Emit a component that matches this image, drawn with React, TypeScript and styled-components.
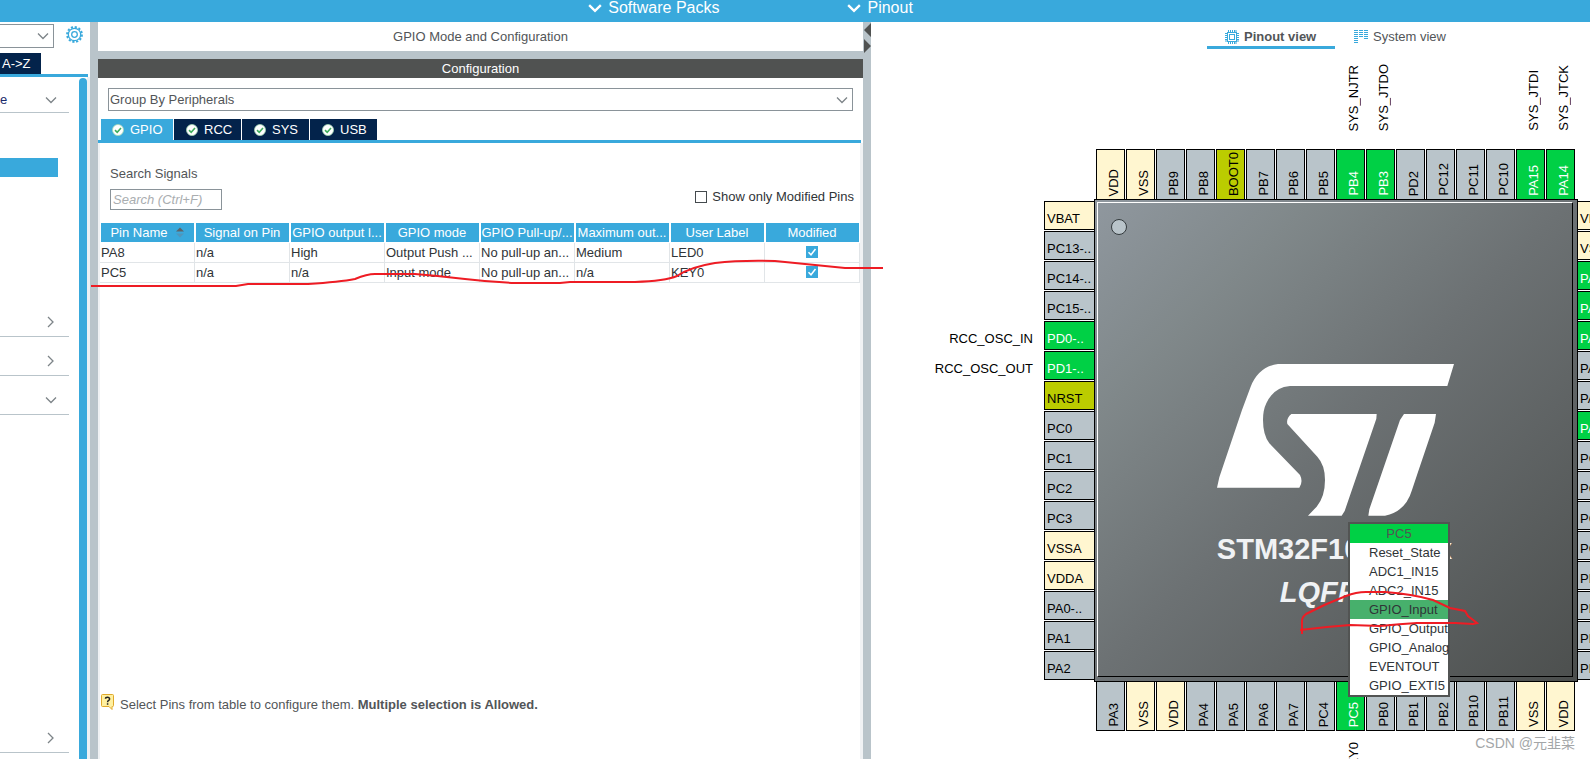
import React from "react";
import styled, { createGlobalStyle, css } from "styled-components";

const blue = "#39a9dc";
const navy = "#03234b";
const steel = "#b9c4ca";
const slate = "#525558";
const dark = "#505251";

const GlobalStyle = createGlobalStyle`
  *, *::before, *::after { box-sizing: border-box; }
  body {
    margin: 0;
    background: #fff;
    color: ${slate};
    font: 13px/16px "Liberation Sans", "Noto Sans CJK SC", sans-serif;
  }
  button, input, select { font: inherit; color: inherit; }
  button { border: 0; padding: 0; background: none; text-align: left; }
`;

const Page = styled.div`
  display: flex;
  flex-direction: column;
  height: 100vh;
  overflow: hidden;
`;

const MenuBar = styled.nav`
  flex: none;
  display: flex;
  gap: 128px;
  height: 22px;
  padding-left: 37%;
  background: ${blue};
`;

const MenuButton = styled.button`
  display: flex;
  align-items: center;
  gap: 6px;
  height: 16px;
  font-size: 16px;
  line-height: 16px;
  color: #fff;
`;

const Workspace = styled.div`
  flex: 1;
  min-height: 0;
  display: grid;
  grid-template-columns: 90px 8px minmax(0, 765fr) 8px minmax(0, 719fr);
`;

const Divider = styled.div`
  position: relative;
  background: ${steel};
`;

const SplitArrows = styled.svg`
  display: block;
`;

/* ---------- category column ---------- */

const Sidebar = styled.aside`
  display: flex;
  flex-direction: column;
  overflow: hidden;
`;

const SearchLine = styled.div`
  display: flex;
  align-items: center;
  gap: 12px;
  height: 26px;
  margin-top: 1px;
`;

const SelectBox = styled.div<{ $open?: boolean }>`
  position: relative;
  width: 100%;
  height: ${(p) => (p.$open ? 24 : 23)}px;
  border: 1px solid #8a9399;
  ${(p) => p.$open && css`width: 54px; border-left: 0;`}
`;

const NativeSelect = styled.select`
  display: block;
  width: 100%;
  height: 100%;
  padding: 0 24px 0 1px;
  border: 0;
  border-radius: 0;
  background: #fff;
  appearance: none;
`;

const SelectArrow = styled.span`
  position: absolute;
  top: 5px;
  right: 4px;
  display: flex;
  pointer-events: none;
`;

const SortTabs = styled.div`
  display: flex;
  width: 88px;
  margin-top: 4px;
  border-bottom: 3px solid ${blue};
`;

const SortTab = styled.button`
  width: 41px;
  height: 21px;
  padding-left: 2px;
  background: ${navy};
  color: #fff;
`;

const CategoryArea = styled.div`
  flex: 1;
  min-height: 0;
  display: flex;
  justify-content: space-between;
  padding-right: 3px;
  background: linear-gradient(to right, #fff 87px, #edf1f4 87px);
`;

const CategoryList = styled.div`
  width: 69px;
`;

const CategoryButton = styled.button<{ $first?: boolean }>`
  display: flex;
  align-items: center;
  justify-content: space-between;
  width: 100%;
  height: ${(p) => (p.$first ? 36 : 39)}px;
  padding: 10px 12px 0 0;
  border-bottom: 1px solid ${steel};
  color: #1b2a6b;
`;

const CategoryBody = styled.div<{ $height: number }>`
  height: ${(p) => p.$height}px;
  padding-top: 45px;
`;

const SelectedItem = styled.div`
  width: 58px;
  height: 19px;
  background: ${blue};
`;

const ScrollThumb = styled.div`
  width: 8px;
  margin-top: 1px;
  border-radius: 4px 4px 0 0;
  background: ${blue};
`;

/* ---------- configuration panel ---------- */

const ConfigPanel = styled.section`
  position: relative;
  display: flex;
  flex-direction: column;
  min-width: 0;
`;

const PanelTitle = styled.h1`
  margin: 0;
  height: 29px;
  font-size: 13px;
  font-weight: 400;
  line-height: 29px;
  text-align: center;
`;

const PanelSubtitle = styled.h2`
  margin: 0;
  height: 27px;
  border-top: 8px solid ${steel};
  background: ${dark};
  color: #fff;
  font-size: 13px;
  font-weight: 400;
  line-height: 19px;
  text-align: center;
`;

const GroupLine = styled.div`
  padding: 10px 10px 8px;
`;

const PeripheralTabs = styled.div`
  display: flex;
  gap: 1px;
  margin-right: 2px;
  padding-left: 3px;
  border-bottom: 3px solid ${blue};
`;

const PeripheralTab = styled.button<{ $active?: boolean }>`
  display: flex;
  align-items: center;
  gap: 6px;
  width: ${(p) => (p.$active ? 72 : 67)}px;
  height: 21px;
  padding-left: ${(p) => (p.$active ? 11 : 12)}px;
  background: ${(p) => (p.$active ? blue : navy)};
  color: #fff;
`;

const TabBody = styled.div`
  flex: 1;
  display: flex;
  flex-direction: column;
  border: solid #f0f2f4;
  border-width: 0 3px 0 2px;
`;

const FilterLine = styled.div`
  display: flex;
  justify-content: space-between;
  align-items: flex-end;
  padding: 23px 6px 0 10px;
`;

const SearchField = styled.label`
  display: flex;
  flex-direction: column;
  gap: 7px;
`;

const SearchInput = styled.input`
  width: 112px;
  height: 21px;
  padding: 0 2px;
  border: 1px solid #8a9399;
  &::placeholder { color: #a9adb0; font-style: italic; opacity: 1; }
`;

const CheckLabel = styled.label`
  display: flex;
  align-items: center;
  gap: 5px;
  margin-bottom: 5px;
  color: #2f3437;
`;

const CheckBox = styled.input`
  width: 12px;
  height: 12px;
  margin: 0;
  border: 1px solid #444a4e;
  background: #fff;
  appearance: none;
  &:checked {
    border-color: ${blue};
    background: ${blue} url("data:image/svg+xml,%3Csvg xmlns='http://www.w3.org/2000/svg' viewBox='0 0 10 10'%3E%3Cpath d='M1.5 5.3 4 7.8 8.5 2' fill='none' stroke='%23fff' stroke-width='1.5'/%3E%3C/svg%3E") center / 10px no-repeat;
  }
`;

const PinTable = styled.table`
  width: 100%;
  margin-top: 13px;
  border-spacing: 0;
  table-layout: fixed;
  color: #2f3437;
  white-space: nowrap;
`;

const HeadCell = styled.th`
  height: 20px;
  padding: 0;
  border: 0 solid #fff;
  border-width: 0 1px 1px;
  background: ${blue};
  color: #fff;
  font-weight: 400;
  overflow: hidden;
`;

const HeadContent = styled.span`
  display: inline-flex;
  align-items: center;
  gap: 8px;
  padding-right: 1px;
`;

const Cell = styled.td<{ $center?: boolean }>`
  height: 20px;
  padding: 0 0 0 1px;
  border: 0 solid #e1e5e8;
  border-width: 0 1px 1px 0;
  overflow: hidden;
  text-align: ${(p) => (p.$center ? "center" : "left")};
  ${(p) => p.$center && css`padding: 0 0 2px;`}
  ${CheckBox} { display: block; margin: 0 auto; }
`;

const Hint = styled.p`
  display: flex;
  align-items: center;
  gap: 6px;
  margin: auto 0 43px;
  padding-left: 1px;
`;

const HintIcon = styled.svg`
  margin-bottom: 6px;
`;

const PanelInk = styled.svg`
  position: absolute;
  top: 230px;
  left: -8px;
  overflow: visible;
  pointer-events: none;
  z-index: 2;
`;

/* ---------- pinout canvas ---------- */

const Canvas = styled.main`
  position: relative;
  min-width: 0;
  overflow: hidden;
`;

const CanvasInner = styled.div`
  display: flex;
  flex-direction: column;
  align-items: center;
  min-width: 930px;
`;

const ViewTabs = styled.div`
  display: flex;
  padding-right: 2px;
`;

const ViewTab = styled.button<{ $active?: boolean }>`
  display: flex;
  align-items: center;
  gap: 5px;
  width: 128px;
  height: 27px;
  padding: 5px 0 0 ${(p) => (p.$active ? 18 : 19)}px;
  border-bottom: 3px solid ${(p) => (p.$active ? blue : "transparent")};
  font-weight: ${(p) => (p.$active ? 700 : 400)};
`;

const Package = styled.div`
  display: grid;
  grid-template-columns: 170px 484px 170px;
  grid-template-areas: ". top ." "left chip right" ". bottom .";
`;

type Side = "top" | "bottom" | "left" | "right";

const PinBank = styled.div<{ $side: Side }>`
  grid-area: ${(p) => p.$side};
  display: flex;
  gap: 1px;
  padding-left: 2px;
  ${(p) => p.$side === "top" && css`height: 150px; align-items: flex-end;`}
  ${(p) => (p.$side === "left" || p.$side === "right") && css`
    flex-direction: column;
    padding: 2px 0 0;
    align-items: ${p.$side === "left" ? "flex-end" : "flex-start"};
  `}
`;

const Slot = styled.div<{ $side: Side }>`
  display: flex;
  flex-direction: ${(p) =>
    ({ top: "column-reverse", bottom: "column", left: "row-reverse", right: "row" })[p.$side]};
`;

const pinColors = {
  free: ["#b9c4ca", "#000"],
  power: ["#fff6d0", "#000"],
  system: ["#bbcc00", "#000"],
  used: ["#00d045", "#fff"],
} as const;

type Kind = keyof typeof pinColors;

const upright = css`
  writing-mode: vertical-rl;
  transform: rotate(180deg);
`;

const PinText = styled.span<{ $side: Side }>`
  display: block;
  line-height: 16px;
  white-space: nowrap;
  ${(p) => (p.$side === "top" || p.$side === "bottom") && upright}
`;

const PinBox = styled.button<{ $side: Side; $kind: Kind }>`
  display: flex;
  border: 1px solid #000;
  background: ${(p) => pinColors[p.$kind][0]};
  color: ${(p) => pinColors[p.$kind][1]};
  ${(p) =>
    p.$side === "top" || p.$side === "bottom"
      ? css`
          width: 29px;
          height: ${p.$side === "top" ? 50 : 49}px;
          align-items: flex-end;
          padding: 0 0 3px 9px;
          border-${p.$side === "top" ? "bottom" : "top"}-width: 0;
        `
      : css`
          width: 50px;
          height: 29px;
          padding: 9px 0 0 2px;
          border-${p.$side === "left" ? "right" : "left"}-width: 0;
        `}
`;

const Signal = styled.span<{ $side: Side }>`
  color: #000;
  ${(p) => p.$side === "top" && css`padding: 0 0 18px 10px;`}
  ${(p) => p.$side === "bottom" && css`padding: 11px 0 0 10px;`}
  ${(p) => p.$side === "left" && css`padding: 10px 11px 0 0;`}
`;

const Chip = styled.div`
  grid-area: chip;
  position: relative;
  height: 483px;
  padding: 2px 4px 4px 2px;
  border: 1px solid #000;
  background: linear-gradient(135deg, #8f979e, #4b4e4d);
`;

const ChipFace = styled.div`
  display: flex;
  flex-direction: column;
  height: 100%;
  padding: 16px 0 0 13px;
  border: 1px solid #000;
  border-top-color: #fff;
  border-left-color: #fff;
  background: linear-gradient(135deg, #8f979e, #80888a 22%, #6c7173 50%, #4d504f);
`;

const PinOneMark = styled.span`
  width: 16px;
  height: 16px;
  border: 1px solid #333a3d;
  border-radius: 50%;
  background: ${steel};
`;

const Logo = styled.svg`
  display: block;
  margin: 129px 0 0 106px;
`;

const ChipName = styled.div<{ $italic?: boolean }>`
  margin-top: ${(p) => (p.$italic ? 10 : 17)}px;
  padding-right: 14px;
  color: #f0f2f4;
  font-size: 29px;
  font-weight: 700;
  font-style: ${(p) => (p.$italic ? "italic" : "normal")};
  line-height: 33px;
  text-align: center;
`;

const PinMenu = styled.div`
  position: absolute;
  top: 322px;
  left: 253px;
  z-index: 2;
  display: flex;
  flex-direction: column;
  width: 102px;
  border: 2px solid #525453;
  background: #fff;
`;

const PinMenuTitle = styled.div`
  height: 19px;
  background: #00d045;
  color: #525453;
  line-height: 19px;
  text-align: center;
`;

const PinMenuItem = styled.button<{ $active?: boolean }>`
  height: 19px;
  padding-left: 19px;
  background: ${(p) => (p.$active ? "#47b06c" : "#fff")};
  color: #2f3437;
  line-height: 19px;
  white-space: nowrap;
`;

const ChipInk = styled.svg`
  position: absolute;
  top: 391px;
  left: 205px;
  z-index: 3;
  pointer-events: none;
`;

const Watermark = styled.div`
  position: absolute;
  right: 15px;
  bottom: 6px;
  color: #a3a6a8;
  font-size: 14px;
  line-height: 20px;
`;

/* ---------- drawings ---------- */

const Chevron = ({ dir = "down", bold }: { dir?: "down" | "right"; bold?: boolean }) => (
  <svg width={bold ? 14 : 12} height={bold ? 14 : 12} viewBox="0 0 12 12" aria-hidden="true"
    fill="none" stroke={bold ? "#fff" : "#7d8488"} strokeWidth={bold ? 2 : 1.3}>
    <path d={dir === "down" ? "M1 3.5 6 8.5 11 3.5" : "M3 1 8 6 3 11"} />
  </svg>
);

const Gear = () => (
  <svg width="17" height="17" viewBox="0 0 17 17" fill="none" stroke={blue} aria-hidden="true">
    <circle cx="8.5" cy="8.5" r="6.2" strokeWidth="1.3" />
    <circle cx="8.5" cy="8.5" r="7.5" strokeWidth="1.8" strokeDasharray="2.2 1.727" />
    <circle cx="8.5" cy="8.5" r="2.8" strokeWidth="1.3" />
  </svg>
);

const CheckBadge = () => (
  <svg width="12" height="12" viewBox="0 0 12 12" aria-hidden="true">
    <circle cx="6" cy="6" r="5.5" fill="#fff" stroke="#a5d8b4" strokeWidth="0.8" />
    <path d="M3 6.2 5.2 8.3 9 4" fill="none" stroke="#3fae5d" strokeWidth="1.6" />
  </svg>
);

const SortMark = () => (
  <svg width="8" height="11" viewBox="0 0 8 11" aria-hidden="true">
    <path d="M0 4.5 4 0.5 8 4.5Z" fill="#5d6468" />
    <path d="M0 6.5 4 10.5 8 6.5Z" fill="#5096bb" />
  </svg>
);

const HintMark = () => (
  <HintIcon width="13" height="16" viewBox="0 0 13 16" aria-hidden="true">
    <path d="M.5 1.5q0-1 1-1h10q1 0 1 1v10q0 1-1 1h-.5v3l-3-3H1.500q-1 0-1-1Z" fill="#fff0a0" stroke="#e0a92b" />
    <path d="M4.500 4.800Q4.500 3.200 6.500 3.200T8.600 5Q8.600 6 7.400 6.600 6.600 7 6.600 8.200M6.600 9.300V10.800" fill="none" stroke="#222" strokeWidth="1.5" />
  </HintIcon>
);

const ChipIcon = () => (
  <svg width="14" height="14" viewBox="0 0 14 14" fill="none" stroke={blue} aria-hidden="true">
    <rect x="2.5" y="2.500" width="9" height="9" />
    <rect x="4.500" y="4.500" width="5" height="5" />
    <path d="M3.500 0v2M5.500 0v2M7.500 0v2M9.500 0v2M11 0v2M3.500 12v2M5.500 12v2M7.500 12v2M9.500 12v2M11 12v2M0 3.500h2M0 5.500h2M0 7.500h2M0 9.500h2M0 11h2M12 3.500h2M12 5.500h2M12 7.500h2M12 9.500h2M12 11h2" />
  </svg>
);

const BarsIcon = () => (
  <svg width="14" height="14" viewBox="0 0 14 14" fill="none" stroke={blue} aria-hidden="true">
    <path d="M0 .5h4M0 2.500h4M0 4.500h4M0 6.500h4M0 8.500h4M0 10.500h4M0 12.500h4M5 .5h4M5 2.500h4M5 4.500h4M5 6.500h4M10 .5h4M10 2.500h4M10 4.500h4M10 6.500h4M10 8.500h4" />
  </svg>
);

/* ---------- data ---------- */

type Pin = { name: string; kind: Kind; signal?: string };

const parse = (spec: string): Pin[] =>
  spec.split(" ").map((entry) => {
    const [name, flag, signal] = entry.split(":");
    const kind: Kind = flag === "u" ? "used" : flag === "s" ? "system" : /^V/.test(name) ? "power" : "free";
    return { name, kind, signal };
  });

const banks: Record<Side, Pin[]> = {
  top: parse("VDD VSS PB9 PB8 BOOT0:s PB7 PB6 PB5 PB4:u:SYS_NJTR PB3:u:SYS_JTDO PD2 PC12 PC11 PC10 PA15:u:SYS_JTDI PA14:u:SYS_JTCK"),
  left: parse("VBAT PC13-.. PC14-.. PC15-.. PD0-..:u:RCC_OSC_IN PD1-..:u:RCC_OSC_OUT NRST:s PC0 PC1 PC2 PC3 VSSA VDDA PA0-.. PA1 PA2"),
  right: parse("VDD VSS PA13:u PA12:u PA11:u PA10 PA9 PA8:u PC9 PC8 PC7 PC6 PB15 PB14 PB13 PB12"),
  bottom: parse("PA3 VSS VDD PA4 PA5 PA6 PA7 PC4 PC5:u:KEY0 PB0 PB1 PB2 PB10 PB11 VSS VDD"),
};

const Bank = ({ side }: { side: Side }) => (
  <PinBank $side={side}>
    {banks[side].map((pin, i) => (
      <Slot key={i} $side={side}>
        <PinBox $side={side} $kind={pin.kind}>
          <PinText $side={side}>{pin.name}</PinText>
        </PinBox>
        {pin.signal && (
          <Signal $side={side}>
            <PinText $side={side}>{pin.signal}</PinText>
          </Signal>
        )}
      </Slot>
    ))}
  </PinBank>
);

const columns = ["Pin Name", "Signal on Pin", "GPIO output l...", "GPIO mode", "GPIO Pull-up/...", "Maximum out...", "User Label", "Modified"];
const rows = [
  ["PA8", "n/a", "High", "Output Push ...", "No pull-up an...", "Medium", "LED0"],
  ["PC5", "n/a", "n/a", "Input mode", "No pull-up an...", "n/a", "KEY0"],
];
const modes = ["Reset_State", "ADC1_IN15", "ADC2_IN15", "GPIO_Input", "GPIO_Output", "GPIO_Analog", "EVENTOUT", "GPIO_EXTI5"];

export default function App() {
  return (
    <Page>
      <GlobalStyle />
      <MenuBar>
        <MenuButton><Chevron bold />Software Packs</MenuButton>
        <MenuButton><Chevron bold />Pinout</MenuButton>
      </MenuBar>
      <Workspace>
        <Sidebar>
          <SearchLine>
            <SelectBox $open>
              <NativeSelect aria-label="Find a peripheral"><option></option></NativeSelect>
              <SelectArrow><Chevron /></SelectArrow>
            </SelectBox>
            <button aria-label="Settings"><Gear /></button>
          </SearchLine>
          <SortTabs><SortTab>A-&gt;Z</SortTab></SortTabs>
          <CategoryArea>
            <CategoryList>
              <CategoryButton $first><span>e</span><Chevron /></CategoryButton>
              <CategoryBody $height={185}><SelectedItem /></CategoryBody>
              <CategoryButton aria-label="Analog"><span /><Chevron dir="right" /></CategoryButton>
              <CategoryButton aria-label="Timers"><span /><Chevron dir="right" /></CategoryButton>
              <CategoryButton aria-label="Connectivity"><span /><Chevron /></CategoryButton>
              <CategoryBody $height={299} />
              <CategoryButton aria-label="Computing"><span /><Chevron dir="right" /></CategoryButton>
            </CategoryList>
            <ScrollThumb />
          </CategoryArea>
        </Sidebar>
        <Divider />
        <ConfigPanel>
          <PanelTitle>GPIO Mode and Configuration</PanelTitle>
          <PanelSubtitle>Configuration</PanelSubtitle>
          <GroupLine>
            <SelectBox>
              <NativeSelect aria-label="Grouping"><option>Group By Peripherals</option></NativeSelect>
              <SelectArrow><Chevron /></SelectArrow>
            </SelectBox>
          </GroupLine>
          <PeripheralTabs>
            {["GPIO", "RCC", "SYS", "USB"].map((name, i) => (
              <PeripheralTab key={name} $active={i === 0}><CheckBadge />{name}</PeripheralTab>
            ))}
          </PeripheralTabs>
          <TabBody>
            <FilterLine>
              <SearchField>
                Search Signals
                <SearchInput placeholder="Search (Ctrl+F)" />
              </SearchField>
              <CheckLabel><CheckBox type="checkbox" />Show only Modified Pins</CheckLabel>
            </FilterLine>
            <PinTable>
              <thead>
                <tr>
                  {columns.map((name, i) => (
                    <HeadCell key={name}>
                      <HeadContent>{name}{i === 0 && <SortMark />}</HeadContent>
                    </HeadCell>
                  ))}
                </tr>
              </thead>
              <tbody>
                {rows.map((row) => (
                  <tr key={row[0]}>
                    {row.map((value, i) => <Cell key={i}>{value}</Cell>)}
                    <Cell $center>
                      <CheckBox type="checkbox" defaultChecked aria-label={`${row[0]} modified`} />
                    </Cell>
                  </tr>
                ))}
              </tbody>
            </PinTable>
            <Hint>
              <HintMark />
              <span>Select Pins from table to configure them. <b>Multiple selection is Allowed.</b></span>
            </Hint>
          </TabBody>
          <PanelInk width="800" height="40" fill="none" stroke="#ee1c24" strokeWidth="2" aria-hidden="true">
            <path d="M1 34H146L158 32H218Q250 30 265 27 277 22 285 22H325Q350 24 375 27 400 30 425 31L470 31 480 30H545Q575 29 587 24 600 15 625 11 650 8 685 9L725 13 755 16H793" />
          </PanelInk>
        </ConfigPanel>
        <Divider>
          <SplitArrows width="8" height="32" viewBox="0 0 8 32" aria-hidden="true">
            <path d="M8 1V15L1 8ZM1 17V31L8 24Z" fill={dark} />
          </SplitArrows>
        </Divider>
        <Canvas>
          <CanvasInner>
            <ViewTabs>
              <ViewTab $active><ChipIcon />Pinout view</ViewTab>
              <ViewTab><BarsIcon />System view</ViewTab>
            </ViewTabs>
            <Package>
              <Bank side="top" />
              <Bank side="left" />
              <Chip>
                <ChipFace>
                  <PinOneMark />
                  <Logo width="237" height="152" viewBox="51 72 711 456" fill="#fff" aria-label="ST" role="img">
                    <path d="M234 72H762L742 138H270Q220 142 199 190 189 210 189 240 189 285 208 310L300 405Q310 425 298 443H51L58 412 126 210 152 140Q176 80 234 72Z" />
                    <path d="M274 222H530L529 236 434 513 425 527H324L350 500Q375 470 375 420 375 375 352 350L262 252Q258 235 274 222Z" />
                    <path d="M612 222H708L704 248 652 402 636 450Q617 515 555 527H505L508 508 600 240Z" />
                  </Logo>
                  <ChipName>STM32F103RCTx</ChipName>
                  <ChipName $italic>LQFP64</ChipName>
                </ChipFace>
                <PinMenu>
                  <PinMenuTitle>PC5</PinMenuTitle>
                  {modes.map((mode) => (
                    <PinMenuItem key={mode} $active={mode === "GPIO_Input"}>{mode}</PinMenuItem>
                  ))}
                </PinMenu>
                <ChipInk width="180" height="50" viewBox="1300 590 180 50" fill="none" stroke="#ee1c24" strokeWidth="2" aria-hidden="true">
                  <path d="M1302 633V620Q1302 616 1306 613 1325 603 1346 595 1356 591 1366 591H1385Q1412 593 1433 599L1450 607 1465 610 1468 615 1477 622 1473 623 1455 622H1417Q1400 623 1380 625L1350 624 1327 626 1300 629" />
                </ChipInk>
              </Chip>
              <Bank side="right" />
              <Bank side="bottom" />
            </Package>
          </CanvasInner>
          <Watermark>CSDN @元韭菜</Watermark>
        </Canvas>
      </Workspace>
    </Page>
  );
}
